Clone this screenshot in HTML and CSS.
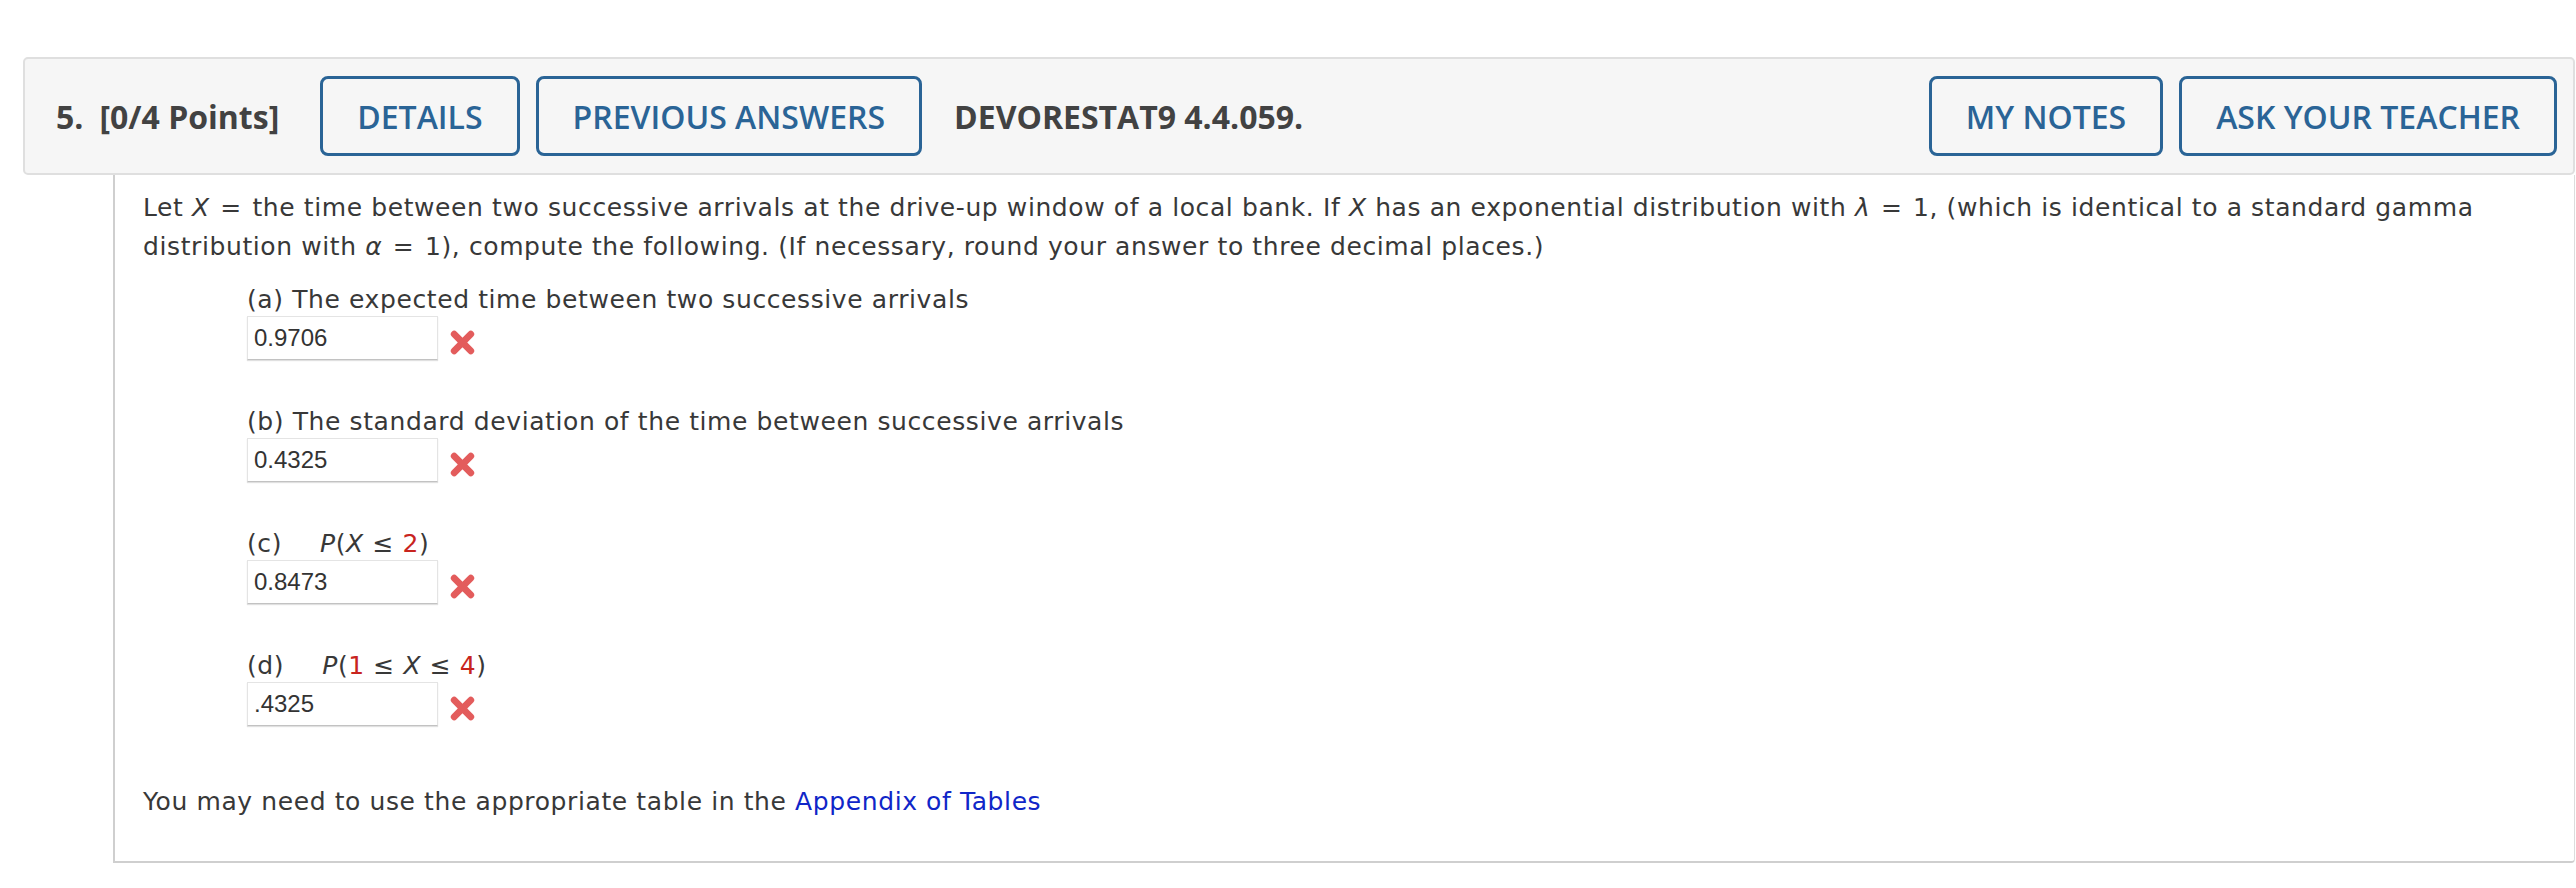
FILE: index.html
```html
<!DOCTYPE html>
<html lang="en">
<head>
  <meta charset="UTF-8" />
  <title>Question 5 - DEVORESTAT9 4.4.059</title>
  <link rel="stylesheet" href="styles.css">
</head>
<body>
  <div class="question">
    <div class="question-header">
      <span class="q-number">5.</span>
      <span class="q-points">[0/4 Points]</span>
      <button class="hdr-btn">DETAILS</button>
      <button class="hdr-btn">PREVIOUS ANSWERS</button>
      <span class="q-code">DEVORESTAT9 4.4.059.</span>
      <div class="hdr-right">
        <button class="hdr-btn">MY NOTES</button>
        <button class="hdr-btn">ASK YOUR TEACHER</button>
      </div>
    </div>

    <div class="question-body">
      <p class="prompt">Let <var>X</var> <span class="op">=</span> the time between two successive arrivals at the drive-up window of a local bank. If <var>X</var> has an exponential distribution with <var>&lambda;</var> <span class="op">=</span> 1, (which is identical to a standard gamma distribution with <var>&alpha;</var> <span class="op">=</span> 1), compute the following. (If necessary, round your answer to three decimal places.)</p>

      <div class="parts">
        <div class="part">
          <div class="part-label">(a) The expected time between two successive arrivals</div>
          <div class="answer-row">
            <input class="answer" type="text" value="0.9706" readonly />
            <svg class="wrong" viewBox="0 0 26 26"><path d="M5 5 L21 21 M21 5 L5 21" /></svg>
          </div>
        </div>

        <div class="part">
          <div class="part-label">(b) The standard deviation of the time between successive arrivals</div>
          <div class="answer-row">
            <input class="answer" type="text" value="0.4325" readonly />
            <svg class="wrong" viewBox="0 0 26 26"><path d="M5 5 L21 21 M21 5 L5 21" /></svg>
          </div>
        </div>

        <div class="part">
          <div class="part-label">(c)<span class="expr"><var>P</var>(<var>X</var> &le; <span class="given">2</span>)</span></div>
          <div class="answer-row">
            <input class="answer" type="text" value="0.8473" readonly />
            <svg class="wrong" viewBox="0 0 26 26"><path d="M5 5 L21 21 M21 5 L5 21" /></svg>
          </div>
        </div>

        <div class="part">
          <div class="part-label">(d)<span class="expr"><var>P</var>(<span class="given">1</span> &le; <var>X</var> &le; <span class="given">4</span>)</span></div>
          <div class="answer-row">
            <input class="answer" type="text" value=".4325" readonly />
            <svg class="wrong" viewBox="0 0 26 26"><path d="M5 5 L21 21 M21 5 L5 21" /></svg>
          </div>
        </div>
      </div>

      <p class="prompt note">You may need to use the appropriate table in the <a href="#">Appendix of Tables</a></p>
    </div>
  </div>
</body>
</html>
```

FILE: styles.css
```css
body {
  margin: 0;
  background: #fff;
  font-family: "DejaVu Sans", Verdana, sans-serif;
  color: #383838;
}
.question {
  margin: 57px 1px 0 23px;
}
.question-header {
  display: flex;
  align-items: center;
  height: 118px;
  box-sizing: border-box;
  padding: 0 16px 0 31px;
  background: #f6f6f6;
  border: 2px solid #dfdfdf;
  border-radius: 5px;
  font-family: "Open Sans", sans-serif;
  color: #424242;
}
.q-number, .q-points, .q-code {
  font-size: 32px;
  font-weight: 700;
}
.q-number {
  margin-right: 16px;
}
.q-points {
  margin-right: 41px;
}
.q-code {
  margin-left: 16px;
}
.hdr-btn {
  height: 80px;
  padding: 0 34px;
  margin-right: 16px;
  background: transparent;
  border: 3px solid #2a6496;
  border-radius: 8px;
  color: #2a6496;
  font-family: "Open Sans", sans-serif;
  font-size: 32px;
  font-weight: 600;
  cursor: pointer;
}
.hdr-right {
  margin-left: auto;
  display: flex;
  gap: 16px;
}
.hdr-right .hdr-btn {
  margin-right: 0;
}
.question-body {
  margin-left: 90px;
  padding: 13px 30px 40px 28px;
  border-left: 2px solid #cfcfcf;
  border-right: 1px solid #dcdcdc;
  border-bottom: 2px solid #cfcfcf;
  border-bottom-right-radius: 4px;
}
.prompt, .part-label {
  font-size: 25px;
  letter-spacing: 0.6px;
}
.prompt {
  margin: 0;
  line-height: 39px;
}
var {
  font-style: italic;
}
.op {
  padding: 0 2px;
}
.parts {
  margin: 17px 0 0 104px;
}
.part + .part {
  margin-top: 45px;
}
.part-label {
  line-height: 33px;
}
.expr {
  margin-left: 38px;
}
.given {
  color: #c8241e;
}
.answer-row {
  display: flex;
  align-items: flex-end;
  gap: 11px;
}
.answer {
  width: 191px;
  height: 44px;
  box-sizing: border-box;
  margin: 0;
  padding: 0 6px;
  border: 1px solid #e4e4e4;
  border-bottom-color: #c2c2c2;
  box-shadow: 0 1px 1px rgba(0,0,0,0.12);
  font-family: "Liberation Sans", Arial, sans-serif;
  font-size: 24px;
  color: #333;
  background: #fff;
  outline: none;
}
.wrong {
  width: 27px;
  height: 27px;
  margin-bottom: 4px;
}
.wrong path {
  stroke: #e35c5c;
  stroke-width: 6.5;
  stroke-linecap: round;
  fill: none;
}
.note {
  margin-top: 56px;
}
.note a {
  color: #1026c8;
  text-decoration: none;
}
```
